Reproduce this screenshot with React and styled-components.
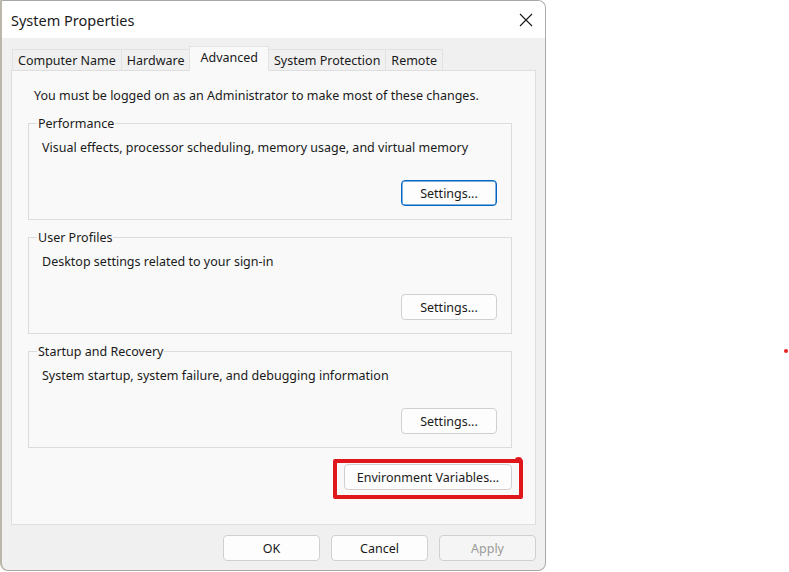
import React from 'react';
import styled, { createGlobalStyle } from 'styled-components';

const GlobalStyle = createGlobalStyle`
  html, body {
    margin: 0;
    padding: 0;
    background: #ffffff;
  }
  body {
    font-family: "Noto Sans", "Open Sans", sans-serif;
    color: #1a1a1a;
  }
`;

const Page = styled.div`
  position: relative;
  width: 789px;
  height: 572px;
  background: #fff;
  overflow: hidden;
`;

const Window = styled.div`
  width: 546px;
  height: 571px;
  display: flex;
  flex-direction: column;
  background: #f0f0f0;
  border: 1px solid #a9a9a4;
  border-left: 2px solid #b9b8a8;
  border-radius: 0 8px 8px 8px;
  box-sizing: border-box;
  overflow: hidden;
`;

const TitleBar = styled.div`
  height: 37px;
  flex: none;
  display: flex;
  align-items: center;
  justify-content: space-between;
  background: #fff;
  padding: 0 11px 0 9px;
`;

const Title = styled.div`
  font-size: 14.5px;
  color: #1b1b1b;
`;

const CloseBtn = styled.div`
  width: 16px;
  height: 16px;
  display: flex;
  align-items: center;
  justify-content: center;
`;

const Body = styled.div`
  flex: 1;
  display: flex;
  flex-direction: column;
  padding: 7px 9px 0 9px;
`;

const TabRow = styled.div`
  display: flex;
  align-items: flex-end;
  height: 25px;
  flex: none;
  padding-left: 2px;
`;

const Tab = styled.div`
  height: ${p => (p.$active ? '25px' : '21px')};
  padding: ${p => (p.$active ? '0 10px 3px 10px' : '0 5px')};
  box-sizing: border-box;
  display: flex;
  align-items: center;
  font-size: 12.5px;
  background: ${p => (p.$active ? '#f9f9f9' : '#f0f0f0')};
  border: 1px solid #e3e3e3;
  border-bottom: ${p => (p.$active ? '1px solid #f9f9f9' : 'none')};
  margin-left: -1px;
  margin-bottom: ${p => (p.$active ? '-1px' : '0')};
  position: relative;
  z-index: ${p => (p.$active ? 1 : 0)};
  color: #1a1a1a;
  white-space: nowrap;
`;

const Panel = styled.div`
  height: 455px;
  flex: none;
  box-sizing: border-box;
  background: #f9f9f9;
  border: 1px solid #dedede;
  display: flex;
  flex-direction: column;
  padding: 16px 23px 0 16px;
  width: 525px;
`;

const Note = styled.div`
  font-size: 12.5px;
  margin-left: 6px;
  margin-bottom: 11px;
`;

const Group = styled.fieldset`
  margin: 0 0 9px 0;
  padding: 7px 14px 0 8px;
  border: 1px solid #dcdcdc;
  height: 105px;
  box-sizing: border-box;
  min-width: 0;
`;

const Legend = styled.legend`
  font-size: 12.5px;
  padding: 0 1px;
  margin-left: 0;
  color: #1a1a1a;
`;

const GroupText = styled.div`
  font-size: 12.5px;
  margin-left: 5px;
  line-height: 17px;
`;

const GroupActions = styled.div`
  margin-top: 24px;
  display: flex;
  justify-content: flex-end;
`;

const Button = styled.button`
  font-family: "Noto Sans", "Open Sans", sans-serif;
  font-size: 12.5px;
  height: 26px;
  width: ${p => p.$w || 96}px;
  flex: none;
  box-sizing: border-box;
  border-radius: 4px;
  background: ${p => (p.$disabled ? '#f5f5f5' : '#fdfdfd')};
  color: ${p => (p.$disabled ? '#9a9a9a' : '#1a1a1a')};
  border: 1px solid ${p => (p.$focus ? '#0067c0' : '#d0d0d0')};
  box-shadow: ${p => (p.$focus ? 'inset 0 0 0 0.5px #0067c0' : 'none')};
  padding: 0;
  cursor: default;
`;

const EnvRow = styled.div`
  display: flex;
  justify-content: flex-end;
  margin-top: 7px;
`;

const Marked = styled.div`
  position: relative;
`;

const RedBox = styled.div`
  position: absolute;
  left: -11px;
  top: -5px;
  width: 190px;
  height: 40px;
  box-sizing: border-box;
  border: 4px solid #e0161d;
  border-radius: 2px;
  pointer-events: none;
  &::after {
    content: '';
    position: absolute;
    right: -3px;
    top: -6px;
    width: 7px;
    height: 6px;
    border-radius: 50%;
    background: #e0161d;
  }
`;

const Footer = styled.div`
  display: flex;
  justify-content: flex-end;
  gap: 11px;
  padding: 10px 0 0 0;
`;

const RedDot = styled.div`
  position: absolute;
  left: 784px;
  top: 349px;
  width: 4px;
  height: 4px;
  border-radius: 50%;
  background: #e52222;
`;

const groups = [
  { title: 'Performance', text: 'Visual effects, processor scheduling, memory usage, and virtual memory', focus: true },
  { title: 'User Profiles', text: 'Desktop settings related to your sign-in' },
  { title: 'Startup and Recovery', text: 'System startup, system failure, and debugging information' },
];

const tabs = ['Computer Name', 'Hardware', 'Advanced', 'System Protection', 'Remote'];

export default function App() {
  return (
    <Page>
      <GlobalStyle />
      <Window>
        <TitleBar>
          <Title>System Properties</Title>
          <CloseBtn>
            <svg width="14" height="14" viewBox="0 0 14 14">
              <path d="M1 1 L13 13 M13 1 L1 13" stroke="#1a1a1a" strokeWidth="1.1" />
            </svg>
          </CloseBtn>
        </TitleBar>
        <Body>
          <TabRow>
            {tabs.map(t => (
              <Tab key={t} $active={t === 'Advanced'}>{t}</Tab>
            ))}
          </TabRow>
          <Panel>
            <Note>You must be logged on as an Administrator to make most of these changes.</Note>
            {groups.map(g => (
              <Group key={g.title}>
                <Legend>{g.title}</Legend>
                <GroupText>{g.text}</GroupText>
                <GroupActions>
                  <Button $focus={g.focus}>Settings...</Button>
                </GroupActions>
              </Group>
            ))}
            <EnvRow>
              <Marked>
                <Button $w={168}>Environment Variables...</Button>
                <RedBox />
              </Marked>
            </EnvRow>
          </Panel>
          <Footer>
            <Button $w={97}>OK</Button>
            <Button $w={97}>Cancel</Button>
            <Button $w={97} $disabled>Apply</Button>
          </Footer>
        </Body>
      </Window>
      <RedDot />
    </Page>
  );
}
